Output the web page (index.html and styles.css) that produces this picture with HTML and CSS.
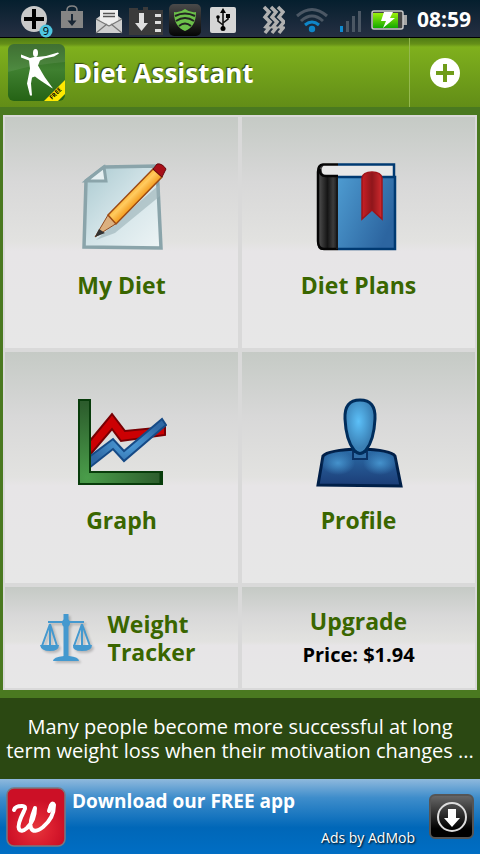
FILE: index.html
```
<!DOCTYPE html>
<html lang="en">
<head>
    <meta charset="UTF-8">
    <meta name="viewport" content="width=device-width, initial-scale=1.0">
    <title>Diet Assistant</title>
    <link rel="stylesheet" href="styles.css">
</head>
<body>
    <div class="status-bar">
        <div class="notifications">
            <svg width="34" height="38" viewBox="0 0 34 38">
                <circle cx="14" cy="19" r="13" fill="#c9c9c9"/>
                <path d="M14 9v20M4 19h20" stroke="#000" stroke-width="4"/>
                <circle cx="26" cy="31" r="6.5" fill="#4fc6e0"/>
                <text x="26" y="35" class="badge-count">9</text>
            </svg>
            <svg width="29" height="36" viewBox="0 0 29 36">
                <path d="M7 11V9q0-4 5-4t5 4v2" fill="none" stroke="#858585" stroke-width="1.5"/>
                <path d="M1 10h22v17H1z" fill="#858585"/>
                <path d="M12 13v9" stroke="#182635" stroke-width="2"/>
                <path d="M7.500 19.500h9L12 25z" fill="#182635"/>
            </svg>
            <svg width="28" height="36" viewBox="0 0 28 36">
                <path d="M1 18l4-3V9h18v6l4 3v14H1z" fill="#cfcfcf"/>
                <path d="M5 9h18v11l-9 6-9-6z" fill="#eee"/>
                <path d="M8 12.500h12M8 15.500h12" stroke="#555" stroke-width="1.500"/>
                <path d="M1 18l13 7 13-7M1 32l11-9M27 32l-11-9" fill="none" stroke="#777" stroke-width="1.200"/>
            </svg>
            <svg width="34" height="36" viewBox="0 0 34 36">
                <path d="M0 7h9v2h5V6h5v3h15v25H0z" fill="#3b3b3b"/>
                <path d="M10 12h5v10h4l-6.500 8L6 22h4z" fill="#e0e0e0"/>
                <path d="M26 13h6v3h-6zM26 20h6v3h-6zM26 28h6v3h-6z" fill="#ddd"/>
            </svg>
            <svg width="34" height="36" viewBox="0 0 34 36">
                <defs>
                    <linearGradient id="tileDark" x2="0" y2="1">
                        <stop offset="0" stop-color="#4a4a4a"/>
                        <stop offset="1" stop-color="#050505"/>
                    </linearGradient>
                </defs>
                <rect y="3" width="32" height="32" rx="5" fill="url(#tileDark)"/>
                <path d="M16 8q5 4 11 3 0 15-11 19Q5 26 5 11q6 1 11-3z" fill="#6cc04a"/>
                <path d="M6 15q10-5 20 0M7 20q9-6 18 0M10 25q6-5 12 0" fill="none" stroke="#222" stroke-width="2"/>
            </svg>
            <svg width="28" height="36" viewBox="0 0 28 36">
                <rect x="1" y="6" width="26" height="26" rx="2" fill="#d6d6d6"/>
                <path d="M14 11v17M14 24l-5-4v-4M14 22l5-4v-3" fill="none" stroke="#111" stroke-width="1.600"/>
                <path d="M14 7l3 5h-6z"/>
                <circle cx="14" cy="27.500" r="2.500"/>
                <circle cx="9" cy="16" r="1.800"/>
                <path d="M17 13h4v4h-4z"/>
            </svg>
        </div>
        <div class="signals">
            <svg width="24" height="36" viewBox="0 0 24 36">
                <g fill="none" stroke="#b0b0b0" stroke-width="3.500">
                    <path d="M3 6l5 5-4 5 5 5-4 5 3 1-4 5"/>
                    <path d="M10 6l5 5-4 5 5 5-4 5 3 1-4 5"/>
                    <path d="M17 6l5 5-4 5 5 5-4 5 3 1-4 5"/>
                </g>
            </svg>
            <svg width="34" height="36" viewBox="0 0 34 36">
                <path d="M2 15Q17 2 32 15M6 20q11-10 22 0" fill="none" stroke="#4b5764" stroke-width="3"/>
                <path d="M10 24q7-6 14 0" fill="none" stroke="#0f86c8" stroke-width="3"/>
                <circle cx="17" cy="28" r="3.200" fill="#0f86c8"/>
            </svg>
            <svg width="22" height="36" viewBox="0 0 22 36">
                <path d="M1 25h3v6H1z" fill="#0f8ad0"/>
                <path d="M7 20h3v11H7zM13 15h3v16h-3zM19 10h3v21h-3z" fill="#4b5764"/>
            </svg>
            <svg width="36" height="36" viewBox="0 0 36 36">
                <defs>
                    <linearGradient id="charge" x2="0" y2="1">
                        <stop offset="0" stop-color="#9cf00c"/>
                        <stop offset="1" stop-color="#12a800"/>
                    </linearGradient>
                </defs>
                <path d="M32 14h4v10h-4z" fill="#a5a5a5"/>
                <rect x="1" y="10" width="31" height="18" rx="2" fill="#444" stroke="#c8c8c8" stroke-width="1.500"/>
                <path d="M2 12h25v15H2z" fill="url(#charge)"/>
                <path d="M13 11h9l-3 6h5L12 27l3-7h-5z" fill="#fff"/>
            </svg>
            <span class="clock">08:59</span>
        </div>
    </div>

    <header class="app-header">
        <svg class="app-logo" viewBox="0 0 57 57">
            <defs>
                <linearGradient id="logoBg" x2="0" y2="1">
                    <stop offset="0" stop-color="#2f6421"/>
                    <stop offset="0.450" stop-color="#3f8030"/>
                    <stop offset="1" stop-color="#256315"/>
                </linearGradient>
                <clipPath id="logoClip"><rect width="57" height="57" rx="6"/></clipPath>
            </defs>
            <g clip-path="url(#logoClip)">
                <rect width="57" height="57" fill="url(#logoBg)"/>
                <path d="M0 0h57v18Q28 20 0 28z" fill="#fff" opacity="0.080"/>
                <path d="M13 10.500l9 3.500 4-1h3l9-1 12-3.500 1 1-5 3-10 2-4 2-2 5 4 7 3 5 8 11-2-1-12-8-4-3-3 1-1 6 1 12h-2l-3-12 2-10 1-5-1-8-8-3z" fill="#fff"/>
                <ellipse cx="27.500" cy="9" rx="2.500" ry="4" fill="#fff"/>
                <path d="M36 57l21-21v14l-7 7z" fill="#ffe800"/>
                <text class="free-text" transform="translate(44 56) rotate(-45)">FREE</text>
            </g>
        </svg>
        <h1>Diet Assistant</h1>
        <button class="add-btn" aria-label="Add">
            <svg width="30" height="30" viewBox="0 0 30 30">
                <circle cx="15" cy="15" r="15" fill="#fff"/>
                <path d="M15 6v18M6 15h18" stroke="#6f9c19" stroke-width="4"/>
            </svg>
        </button>
    </header>

    <main class="menu">
        <a class="tile" href="#diet">
            <svg class="tile-icon" viewBox="0 0 90 90">
                <defs>
                    <linearGradient id="paper" x2="1" y2="1">
                        <stop offset="0" stop-color="#a9c9d0"/>
                        <stop offset="0.500" stop-color="#d3e4e8"/>
                        <stop offset="1" stop-color="#edf4f5"/>
                    </linearGradient>
                    <linearGradient id="wood" gradientUnits="userSpaceOnUse" x1="54" y1="26" x2="64" y2="36">
                        <stop offset="0" stop-color="#ffb02a"/>
                        <stop offset="0.400" stop-color="#ffcb60"/>
                        <stop offset="1" stop-color="#f39a1c"/>
                    </linearGradient>
                </defs>
                <path d="M9 18L27 4l53-1 4 82-77-1z" fill="url(#paper)" stroke="#8aa4aa" stroke-width="3.500"/>
                <path d="M9 18L27 4l2 14z" fill="#e6f0f2" stroke="#8aa4aa" stroke-width="3"/>
                <path d="M19 77l64-56v12L38 70z" fill="#9ab0b5" opacity="0.600"/>
                <path d="M18 74l13-22 9 8z" fill="#dcb07f" stroke="#8f4a20"/>
                <path d="M18 74l4-8 6 4z" fill="#333"/>
                <path d="M31 52L76 6l9 8-46 47z" fill="url(#wood)" stroke="#9c4a14" stroke-width="1.500"/>
                <path d="M76 6l4-5q5-1 9 5l-4 8z" fill="#a80f18" stroke="#650a10"/>
            </svg>
            <span class="tile-label">My Diet</span>
        </a>
        <a class="tile" href="#plans">
            <svg class="tile-icon" viewBox="0 0 90 90">
                <defs>
                    <linearGradient id="cover" x2="1" y2="0.500">
                        <stop offset="0" stop-color="#4f9dd2"/>
                        <stop offset="1" stop-color="#2c65a0"/>
                    </linearGradient>
                    <linearGradient id="spine">
                        <stop offset="0" stop-color="#555"/>
                        <stop offset="0.500" stop-color="#151515"/>
                        <stop offset="0.800" stop-color="#3c3c3c"/>
                        <stop offset="1" stop-color="#1c1c1c"/>
                    </linearGradient>
                    <linearGradient id="ribbon">
                        <stop offset="0" stop-color="#c91f25"/>
                        <stop offset="0.500" stop-color="#8f161b"/>
                        <stop offset="1" stop-color="#d02a2e"/>
                    </linearGradient>
                </defs>
                <path d="M8 2h72v12H8z" fill="#e8e8e8"/>
                <path d="M22 13h59v74H22z" fill="url(#cover)"/>
                <path d="M4 5q2-3 9-3h10v85H8q-5 0-4-8z" fill="url(#spine)"/>
                <path d="M10 2h14v10H10q-5-5 0-10z" fill="#e8e8e8"/>
                <path d="M24 1.500H9Q4 2 4 9v69q0 8 6 8h14M6 6q-1 7 6 7h12" fill="none" stroke="#050505" stroke-width="2.500"/>
                <path d="M24 1.500h56V13M24 14h57v72H24" fill="none" stroke="#003a72" stroke-width="2.500"/>
                <path d="M22 14h2v72h-2z" fill="#181818"/>
                <path d="M48 56V15q1-6 10-6t10 6v41l-10-9z" fill="url(#ribbon)" stroke="#a01319" stroke-width="1.500"/>
            </svg>
            <span class="tile-label">Diet Plans</span>
        </a>
        <a class="tile" href="#graph">
            <svg class="tile-icon" viewBox="0 0 90 90">
                <defs>
                    <radialGradient id="axis" gradientUnits="userSpaceOnUse" cx="10" cy="80" r="75">
                        <stop offset="0" stop-color="#4a9d4a"/>
                        <stop offset="1" stop-color="#2c5c2c"/>
                    </radialGradient>
                    <radialGradient id="lineBlue">
                        <stop offset="0" stop-color="#4fa0dc"/>
                        <stop offset="1" stop-color="#2f68a4"/>
                    </radialGradient>
                </defs>
                <path d="M12 44l23-28 13 17 40-4v8l-44 6-9-12-23 27z" fill="#cc0003" stroke="#780004" stroke-width="2"/>
                <path d="M12 59l24-18 11 12 38-32 4 6-42 36-11-12-24 19z" fill="url(#lineBlue)" stroke="#164a86" stroke-width="2"/>
                <path d="M2 2h11v72h72v12H2z" fill="url(#axis)" stroke="#083c0b" stroke-width="2"/>
                <path d="M84 74v12" stroke="#083c0b" stroke-width="3"/>
            </svg>
            <span class="tile-label">Graph</span>
        </a>
        <a class="tile" href="#profile">
            <svg class="tile-icon" viewBox="0 0 90 90">
                <defs>
                    <radialGradient id="head" cx="0.450" cy="0.400">
                        <stop offset="0" stop-color="#5cc0f8"/>
                        <stop offset="1" stop-color="#3a7fb4"/>
                    </radialGradient>
                    <radialGradient id="glow">
                        <stop offset="0" stop-color="#4592cc"/>
                        <stop offset="1" stop-color="#4592cc" stop-opacity="0"/>
                    </radialGradient>
                    <linearGradient id="torso" x2="0" y2="1">
                        <stop offset="0" stop-color="#2c6da8"/>
                        <stop offset="1" stop-color="#1b3c76"/>
                    </linearGradient>
                </defs>
                <path d="M4 87l5-29q5-6 37-7 31 1 35 7l6 30z" fill="url(#torso)" stroke="#001f48" stroke-width="3"/>
                <ellipse cx="24" cy="65" rx="17" ry="12" fill="url(#glow)"/>
                <ellipse cx="66" cy="65" rx="17" ry="12" fill="url(#glow)"/>
                <path d="M39 54h14v7H39z" fill="#326fa8" stroke="#0a3265" stroke-width="2"/>
                <path d="M46 2q16 0 15 19-1 21-9 31-6 7-12 0-8-10-9-31Q30 2 46 2z" fill="url(#head)" stroke="#002d5c" stroke-width="3"/>
            </svg>
            <span class="tile-label">Profile</span>
        </a>
        <a class="tile tile-small tile-row" href="#weight">
            <svg class="scale-icon" viewBox="0 0 52 50">
                <g fill="none" stroke="#4499cf" stroke-width="2">
                    <path d="M8 9h36M10 11L2 33M10 11l7 22M10 11v22M42 11l-8 22M42 11l8 22M42 11v22"/>
                    <path d="M26 1v44" stroke-width="5"/>
                </g>
                <path d="M0 32h19q0 6-9 6T0 32zM33 32h19q0 6-10 6t-9-6zM13 48q0-4 11-5h5q10 1 10 5z" fill="#4499cf"/>
                <circle cx="26" cy="10" r="4" fill="#4499cf"/>
            </svg>
            <span class="tile-label">Weight<br>Tracker</span>
        </a>
        <a class="tile tile-small" href="#upgrade">
            <span class="tile-label">Upgrade</span>
            <span class="price">Price: $1.94</span>
        </a>
    </main>

    <p class="tip">Many people become more successful at long term weight loss when their motivation changes ...</p>

    <div class="ad">
        <svg class="ad-logo" viewBox="0 0 60 60">
            <defs>
                <radialGradient id="adRed" cy="0.700">
                    <stop offset="0" stop-color="#e5383c"/>
                    <stop offset="0.500" stop-color="#dc2030"/>
                    <stop offset="1" stop-color="#cc1026"/>
                </radialGradient>
            </defs>
            <rect x="1" y="1" width="58" height="58" rx="7" fill="url(#adRed)" stroke="#787880" stroke-width="1.500"/>
            <path d="M8 23q1-4 8-4 5 0 2 5-7 14-5 18 2 4 8-1 8-8 8-20-6 15-4 20 3 6 12-1 11-9 11-22-1-3-3 0l-2 6" fill="none" stroke="#fff" stroke-width="4" stroke-linecap="round" stroke-linejoin="round"/>
        </svg>
        <div class="ad-text">
            <strong>Download our FREE app</strong>
            <span class="ad-by">Ads by AdMob</span>
        </div>
        <button class="ad-btn" aria-label="Download">
            <svg width="30" height="30" viewBox="0 0 30 30">
                <circle cx="15" cy="15" r="14" fill="none" stroke="#ddd" stroke-width="2"/>
                <path d="M11 7h8v9h4l-8 9-8-9h4z" fill="#fff"/>
            </svg>
        </button>
    </div>
</body>
</html>
```
FILE: styles.css
```
:root {
    --label-color: #3a6600;
    --frame-color: #d9d9d9;
    --page-green: #4a7920;
}

* {
    box-sizing: border-box;
}

body {
    margin: 0;
    min-height: 100vh;
    display: flex;
    flex-direction: column;
    font-family: "Open Sans", "Noto Sans", sans-serif;
    background: var(--page-green);
}

svg {
    display: block;
    flex-shrink: 0;
}

button {
    border: none;
    padding: 0;
    cursor: pointer;
}

/* Status bar */
.status-bar {
    display: flex;
    justify-content: space-between;
    height: 38px;
    padding: 0 9px 0 20px;
    background: linear-gradient(#051f2e, #262f42);
    border-bottom: 1px solid #000;
}

.notifications,
.signals {
    display: flex;
    align-items: center;
}

.notifications {
    gap: 6px;
}

.signals {
    gap: 10px;
}

.clock {
    color: #fff;
    font-size: 21px;
    font-weight: bold;
}

.badge-count {
    font-size: 11px;
    text-anchor: middle;
}

/* Header */
.app-header {
    display: flex;
    align-items: center;
    height: 69px;
    padding-left: 8px;
    background: linear-gradient(#4f7c14 0, #658f18 6px, #7fb01d 9px, #628d17 100%);
}

.app-logo {
    width: 57px;
    height: 57px;
}

.free-text {
    font-size: 6px;
    font-weight: bold;
}

.app-header h1 {
    flex: 1;
    margin: 0 0 0 8px;
    color: #fff;
    font-size: 26px;
    text-shadow: -1px -1px 1px rgba(0, 0, 0, 0.6);
}

.add-btn {
    align-self: stretch;
    display: flex;
    align-items: center;
    justify-content: center;
    width: 71px;
    background: none;
    border-left: 1px solid #94b84e;
}

/* Menu tiles */
.menu {
    flex: 1;
    display: grid;
    grid-template-columns: 1fr 1fr;
    grid-template-rows: 231fr 231fr 101fr;
    gap: 4px;
    margin: 8px 3px;
    padding: 2px;
    background: var(--frame-color);
}

.tile {
    display: flex;
    flex-direction: column;
    align-items: center;
    justify-content: center;
    gap: 18px;
    padding-bottom: 4px;
    color: var(--label-color);
    text-decoration: none;
    background: linear-gradient(#c5cac5 0%, #d8d8d8 28%, #e2e2e0 54%, #e7e5e7 58%, #e7e7e7 100%);
}

.tile-icon {
    width: 90px;
    height: 90px;
}

.tile-label {
    font-size: 23px;
    line-height: 28px;
    font-weight: bold;
}

.tile-small {
    gap: 6px;
    padding-bottom: 0;
}

.tile-row {
    flex-direction: row;
    gap: 16px;
    padding-right: 8px;
}

.scale-icon {
    width: 52px;
    height: 50px;
    filter: drop-shadow(2px 2px 1px rgba(0, 0, 0, 0.2));
}

.price {
    color: #000;
    font-size: 20px;
    line-height: 28px;
    font-weight: bold;
}

/* Tip text */
.tip {
    margin: 0;
    padding: 17px 6px 16px;
    color: #fff;
    font-size: 20px;
    line-height: 24px;
    text-align: center;
    background: #2b4812;
}

/* Ad banner */
.ad {
    display: flex;
    align-items: center;
    height: 75px;
    padding: 0 6px;
    color: #fff;
    background: linear-gradient(#8fb9dd 0%, #3e8dcb 25%, #0067b8 65%, #006ec4 100%);
}

.ad-logo {
    width: 60px;
    height: 60px;
}

.ad-text {
    flex: 1;
    align-self: stretch;
    display: flex;
    flex-direction: column;
    justify-content: space-between;
    padding: 10px 14px 4px 6px;
    font-size: 19px;
    line-height: 24px;
}

.ad-by {
    align-self: flex-end;
    font-size: 14px;
    text-shadow: 1px 1px 2px #000;
}

.ad-btn {
    display: flex;
    align-items: center;
    justify-content: center;
    width: 45px;
    height: 45px;
    border: 2px solid #555;
    border-radius: 6px;
    background: linear-gradient(#666, #000 80%);
}
```
